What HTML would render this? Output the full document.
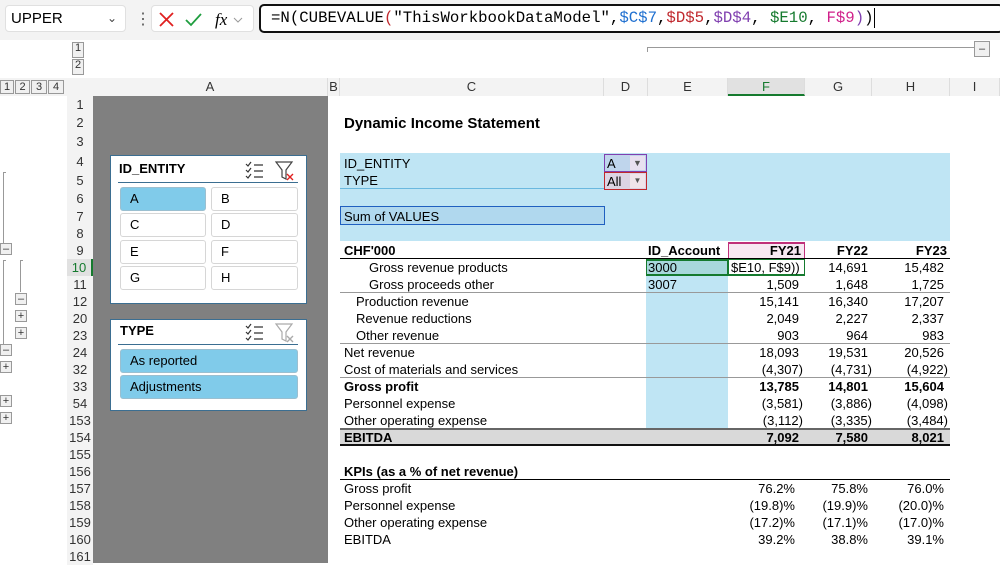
<!DOCTYPE html>
<html><head><meta charset="utf-8"><style>
*{margin:0;padding:0;box-sizing:border-box}
body{width:1000px;height:563px;overflow:hidden;background:#fff;font-family:"Liberation Sans",Arial,sans-serif;position:relative}
.a{position:absolute;white-space:nowrap}
.t{font-size:13px;line-height:17px;color:#000}
.r{text-align:right}
.b{font-weight:bold}
.rh{position:absolute;left:67px;width:26px;text-align:center;font-size:13px;color:#333;background:#f3f3f3}
.ch{position:absolute;top:78px;height:18px;font-size:13px;color:#333;text-align:center;line-height:18px;border-right:1px solid #ddd;background:#f3f3f3}
.ob{position:absolute;width:12px;height:12px;border:1px solid #999;background:#f0f0f0;font-size:11px;line-height:10px;text-align:center;color:#333}
.btn{position:absolute;height:24px;border:1px solid #d6d6d6;border-radius:3px;background:#fff;font-size:13px;line-height:22px;padding-left:9px}
.sel{background:#80cbea;border-color:#9bbfd0}
</style></head><body>
<div class="a" style="left:0;top:0;width:1000px;height:40px;background:#f3f3f3"></div>
<div class="a" style="left:5px;top:5px;width:121px;height:27px;background:#fff;border:1px solid #e0e0e0;border-radius:4px;font-size:15px;line-height:25px;padding-left:5px">UPPER<span style="position:absolute;right:8px;top:0;font-size:12px;color:#444">&#8964;</span></div>
<div class="a" style="left:135px;top:9px;font-size:16px;color:#555">&#8942;</div>
<div class="a" style="left:151px;top:5px;width:103px;height:27px;background:#fff;border:1px solid #e0e0e0;border-radius:4px">
<svg width="103" height="27"><path d="M8 7l13 13M21 7L8 20" stroke="#e02020" stroke-width="1.8"/><path d="M34 14l5 5 10-11" stroke="#1f9e3f" stroke-width="1.8" fill="none"/><text x="63" y="19" font-family="Liberation Serif" font-style="italic" font-size="17">fx</text><path d="M82 12l4 4 4-4" stroke="#999" fill="none"/></svg></div>
<div class="a" style="left:259px;top:4px;width:745px;height:29px;background:#fff;border:2px solid #111;border-radius:5px;font-family:'Liberation Mono',monospace;font-size:15.7px;line-height:25px;padding-left:10px">=N(CUBEVALUE<span style="color:#c0282d">(</span>"ThisWorkbookDataModel",<span style="color:#1e6fd0">$C$7</span>,<span style="color:#c0282d">$D$5</span>,<span style="color:#8040b0">$D$4</span>, <span style="color:#157a2e">$E10</span>, <span style="color:#d0208a">F$9</span><span style="color:#8040b0">)</span>)<span style="display:inline-block;width:1px;height:20px;background:#000;vertical-align:middle"></span></div>
<div class="ob" style="left:72px;top:42px;height:16px">1</div>
<div class="ob" style="left:72px;top:59px;height:16px">2</div>
<div class="a" style="left:647px;top:47px;width:328px;height:1px;background:#999"></div>
<div class="a" style="left:647px;top:47px;width:1px;height:5px;background:#999"></div>
<div class="ob" style="left:974px;top:41px;width:16px;height:16px;line-height:14px">&#8211;</div>
<div class="a" style="left:0;top:78px;width:67px;height:18px;background:#f3f3f3"></div>
<div class="ob" style="left:0;top:80px;width:14px;height:14px;line-height:12px">1</div><div class="ob" style="left:15px;top:80px;width:15px;height:14px;line-height:12px">2</div><div class="ob" style="left:31px;top:80px;width:16px;height:14px;line-height:12px">3</div><div class="ob" style="left:48px;top:80px;width:16px;height:14px;line-height:12px">4</div>
<div class="a" style="left:67px;top:78px;width:26px;height:18px;background:#f3f3f3"></div>
<div class="ch" style="left:93px;width:235px">A</div>
<div class="ch" style="left:328px;width:12px">B</div>
<div class="ch" style="left:340px;width:264px">C</div>
<div class="ch" style="left:604px;width:44px">D</div>
<div class="ch" style="left:648px;width:80px">E</div>
<div class="ch" style="left:728px;width:77px;background:#e1e1e1;color:#157a2e;border-bottom:2px solid #157a2e">F</div>
<div class="ch" style="left:805px;width:67px">G</div>
<div class="ch" style="left:872px;width:78px">H</div>
<div class="ch" style="left:950px;width:50px">I</div>
<div class="a" style="left:67px;top:96px;width:26px;height:467px;background:#f3f3f3"></div>
<div class="rh" style="top:96px;height:18px;line-height:18px">1</div>
<div class="rh" style="top:114px;height:18px;line-height:18px">2</div>
<div class="rh" style="top:132px;height:20px;line-height:20px">3</div>
<div class="rh" style="top:152px;height:19px;line-height:19px">4</div>
<div class="rh" style="top:171px;height:19px;line-height:19px">5</div>
<div class="rh" style="top:190px;height:18px;line-height:18px">6</div>
<div class="rh" style="top:208px;height:18px;line-height:18px">7</div>
<div class="rh" style="top:226px;height:16px;line-height:16px">8</div>
<div class="rh" style="top:242px;height:17px;line-height:17px">9</div>
<div class="rh" style="top:259px;height:17px;line-height:17px;background:#e1e1e1;color:#157a2e;border-right:2px solid #157a2e">10</div>
<div class="rh" style="top:276px;line-height:17px">11</div>
<div class="rh" style="top:293px;line-height:17px">12</div>
<div class="rh" style="top:310px;line-height:17px">20</div>
<div class="rh" style="top:327px;line-height:17px">23</div>
<div class="rh" style="top:344px;line-height:17px">24</div>
<div class="rh" style="top:361px;line-height:17px">32</div>
<div class="rh" style="top:378px;line-height:17px">33</div>
<div class="rh" style="top:395px;line-height:17px">54</div>
<div class="rh" style="top:412px;line-height:17px">153</div>
<div class="rh" style="top:429px;line-height:17px">154</div>
<div class="rh" style="top:446px;line-height:17px">155</div>
<div class="rh" style="top:463px;line-height:17px">156</div>
<div class="rh" style="top:480px;line-height:17px">157</div>
<div class="rh" style="top:497px;line-height:17px">158</div>
<div class="rh" style="top:514px;line-height:17px">159</div>
<div class="rh" style="top:531px;line-height:17px">160</div>
<div class="rh" style="top:548px;line-height:17px">161</div>
<div class="a" style="left:3px;top:172px;width:3px;height:72px;border-left:1px solid #999;border-top:1px solid #999"></div>
<div class="ob" style="left:0;top:243px">&#8211;</div>
<div class="a" style="left:3px;top:260px;width:3px;height:84px;border-left:1px solid #999;border-top:1px solid #999"></div>
<div class="a" style="left:20px;top:260px;width:3px;height:32px;border-left:1px solid #999;border-top:1px solid #999"></div>
<div class="ob" style="left:15px;top:293px">&#8211;</div>
<div class="ob" style="left:15px;top:310px">+</div>
<div class="ob" style="left:15px;top:327px">+</div>
<div class="ob" style="left:0;top:344px">&#8211;</div>
<div class="ob" style="left:0;top:361px">+</div>
<div class="ob" style="left:0;top:395px">+</div>
<div class="ob" style="left:0;top:412px">+</div>
<div class="a" style="left:93px;top:96px;width:235px;height:467px;background:#808080"></div>
<div class="a" style="left:110px;top:155px;width:197px;height:149px;background:#fff;border:1px solid #3b6e91"></div>
<div class="a b" style="left:119px;top:161px;font-size:13px">ID_ENTITY</div>
<svg class="a" style="left:244px;top:160px" width="56" height="22"><path d="M2 4l2 2 3-4M2 10l2 2 3-4M2 16l2 2 3-4M10 5h9M10 11h9M10 17h9" stroke="#333" stroke-width="1.2" fill="none"/><path d="M32 2h16l-6 8v9l-4-2v-7z" stroke="#444" stroke-width="1.2" fill="none"/><path d="M43 14l6 6M49 14l-6 6" stroke="#e02020" stroke-width="1.4"/></svg>
<div class="a" style="left:118px;top:182px;width:180px;height:1px;background:#3b6e91"></div>
<div class="btn sel" style="left:120px;top:187px;width:86px">A</div>
<div class="btn" style="left:211px;top:187px;width:87px">B</div>
<div class="btn" style="left:120px;top:213px;width:86px">C</div>
<div class="btn" style="left:211px;top:213px;width:87px">D</div>
<div class="btn" style="left:120px;top:240px;width:86px">E</div>
<div class="btn" style="left:211px;top:240px;width:87px">F</div>
<div class="btn" style="left:120px;top:266px;width:86px">G</div>
<div class="btn" style="left:211px;top:266px;width:87px">H</div>
<div class="a" style="left:110px;top:319px;width:197px;height:92px;background:#fff;border:1px solid #3b6e91"></div>
<div class="a b" style="left:120px;top:323px;font-size:13px">TYPE</div>
<svg class="a" style="left:244px;top:322px" width="56" height="22"><path d="M2 4l2 2 3-4M2 10l2 2 3-4M2 16l2 2 3-4M10 5h9M10 11h9M10 17h9" stroke="#333" stroke-width="1.2" fill="none"/><path d="M32 2h16l-6 8v9l-4-2v-7z" stroke="#aaa" stroke-width="1.2" fill="none"/><path d="M43 14l6 6M49 14l-6 6" stroke="#aaa" stroke-width="1.4"/></svg>
<div class="a" style="left:118px;top:344px;width:180px;height:1px;background:#3b6e91"></div>
<div class="btn sel" style="left:120px;top:349px;width:178px">As reported</div>
<div class="btn sel" style="left:120px;top:375px;width:178px">Adjustments</div>
<div class="a b" style="left:344px;top:115px;font-size:15px">Dynamic Income Statement</div>
<div class="a" style="left:340px;top:153px;width:610px;height:88px;background:#bfe5f4"></div>
<div class="a" style="left:340px;top:188px;width:264px;height:1px;background:#6ab8df"></div>
<div class="a t" style="left:344px;top:155px">ID_ENTITY</div>
<div class="a t" style="left:344px;top:172px">TYPE</div>
<div class="a" style="left:604px;top:154px;width:43px;height:18px;border:1px solid #8040b0;background:#bfd5ec"></div>
<div class="a t" style="left:607px;top:155px">A</div>
<div class="a" style="left:630px;top:156px;width:15px;height:14px;background:#e8e0f0;font-size:9px;text-align:center;line-height:14px;color:#555">&#9660;</div>
<div class="a" style="left:604px;top:172px;width:43px;height:18px;border:1px solid #c0282d;background:#dcd4e4"></div>
<div class="a t" style="left:607px;top:173px">All</div>
<div class="a" style="left:630px;top:174px;width:15px;height:14px;background:#f0e4ea;font-size:8px;text-align:center;line-height:14px;color:#555">&#9660;</div>
<div class="a" style="left:340px;top:206px;width:265px;height:19px;border:1px solid #2060c0;background:#b0d8ee"></div>
<div class="a t" style="left:344px;top:208px">Sum of VALUES</div>
<div class="a" style="left:646px;top:259px;width:82px;height:170px;background:#bfe5f4"></div>
<div class="a" style="left:646px;top:259px;width:82px;height:17px;background:#a8d8dc;border:1px solid #157a2e;border-width:2px 1px"></div>
<div class="a" style="left:728px;top:242px;width:77px;height:17px;background:#f7e8f2;border:1px solid #c0307a;border-top-width:2px"></div>
<div class="a" style="left:728px;top:259px;width:77px;height:17px;border:1px solid #157a2e;border-bottom-width:2px"></div>
<div class="a t b" style="left:344px;top:242px">CHF'000</div>
<div class="a t b" style="left:648px;top:242px">ID_Account</div>
<div class="a t b r" style="left:728px;top:242px;width:73px">FY21</div>
<div class="a t b r" style="left:805px;top:242px;width:63px">FY22</div>
<div class="a t b r" style="left:872px;top:242px;width:75px">FY23</div>
<div class="a" style="left:340px;top:258px;width:610px;height:1px;background:#000"></div>
<div class="a t" style="left:369px;top:259px">Gross revenue products</div>
<div class="a t" style="left:648px;top:259px">3000</div>
<div class="a t" style="left:731px;top:259px">$E10, F$9))</div>
<div class="a t r" style="left:805px;top:259px;width:63px">14,691</div>
<div class="a t r" style="left:872px;top:259px;width:72px">15,482</div>
<div class="a t" style="left:369px;top:276px">Gross proceeds other</div>
<div class="a t" style="left:648px;top:276px">3007</div>
<div class="a t r" style="left:728px;top:276px;width:71px">1,509</div>
<div class="a t r" style="left:805px;top:276px;width:63px">1,648</div>
<div class="a t r" style="left:872px;top:276px;width:72px">1,725</div>
<div class="a" style="left:340px;top:292px;width:610px;height:1px;background:#999"></div>
<div class="a t" style="left:356px;top:293px">Production revenue</div>
<div class="a t r" style="left:728px;top:293px;width:71px">15,141</div>
<div class="a t r" style="left:805px;top:293px;width:63px">16,340</div>
<div class="a t r" style="left:872px;top:293px;width:72px">17,207</div>
<div class="a t" style="left:356px;top:310px">Revenue reductions</div>
<div class="a t r" style="left:728px;top:310px;width:71px">2,049</div>
<div class="a t r" style="left:805px;top:310px;width:63px">2,227</div>
<div class="a t r" style="left:872px;top:310px;width:72px">2,337</div>
<div class="a t" style="left:356px;top:327px">Other revenue</div>
<div class="a t r" style="left:728px;top:327px;width:71px">903</div>
<div class="a t r" style="left:805px;top:327px;width:63px">964</div>
<div class="a t r" style="left:872px;top:327px;width:72px">983</div>
<div class="a" style="left:340px;top:343px;width:610px;height:1px;background:#999"></div>
<div class="a t" style="left:344px;top:344px">Net revenue</div>
<div class="a t r" style="left:728px;top:344px;width:71px">18,093</div>
<div class="a t r" style="left:805px;top:344px;width:63px">19,531</div>
<div class="a t r" style="left:872px;top:344px;width:72px">20,526</div>
<div class="a t" style="left:344px;top:361px">Cost of materials and services</div>
<div class="a t r" style="left:728px;top:361px;width:75px">(4,307)</div>
<div class="a t r" style="left:805px;top:361px;width:67px">(4,731)</div>
<div class="a t r" style="left:872px;top:361px;width:76px">(4,922)</div>
<div class="a" style="left:340px;top:377px;width:610px;height:1px;background:#999"></div>
<div class="a t b" style="left:344px;top:378px">Gross profit</div>
<div class="a t b r" style="left:728px;top:378px;width:71px">13,785</div>
<div class="a t b r" style="left:805px;top:378px;width:63px">14,801</div>
<div class="a t b r" style="left:872px;top:378px;width:72px">15,604</div>
<div class="a t" style="left:344px;top:395px">Personnel expense</div>
<div class="a t r" style="left:728px;top:395px;width:75px">(3,581)</div>
<div class="a t r" style="left:805px;top:395px;width:67px">(3,886)</div>
<div class="a t r" style="left:872px;top:395px;width:76px">(4,098)</div>
<div class="a t" style="left:344px;top:412px">Other operating expense</div>
<div class="a t r" style="left:728px;top:412px;width:75px">(3,112)</div>
<div class="a t r" style="left:805px;top:412px;width:67px">(3,335)</div>
<div class="a t r" style="left:872px;top:412px;width:76px">(3,484)</div>
<div class="a" style="left:340px;top:428px;width:610px;height:18px;background:#d9d9d9;border-top:2px solid #666;border-bottom:2px solid #111"></div>
<div class="a t b" style="left:344px;top:429px">EBITDA</div>
<div class="a t b r" style="left:728px;top:429px;width:71px">7,092</div>
<div class="a t b r" style="left:805px;top:429px;width:63px">7,580</div>
<div class="a t b r" style="left:872px;top:429px;width:72px">8,021</div>
<div class="a t b" style="left:344px;top:463px">KPIs (as a % of net revenue)</div>
<div class="a" style="left:340px;top:479px;width:610px;height:1px;background:#000"></div>
<div class="a t" style="left:344px;top:480px">Gross profit</div>
<div class="a t r" style="left:728px;top:480px;width:67px">76.2%</div>
<div class="a t r" style="left:805px;top:480px;width:63px">75.8%</div>
<div class="a t r" style="left:872px;top:480px;width:72px">76.0%</div>
<div class="a t" style="left:344px;top:497px">Personnel expense</div>
<div class="a t r" style="left:728px;top:497px;width:67px">(19.8)%</div>
<div class="a t r" style="left:805px;top:497px;width:63px">(19.9)%</div>
<div class="a t r" style="left:872px;top:497px;width:72px">(20.0)%</div>
<div class="a t" style="left:344px;top:514px">Other operating expense</div>
<div class="a t r" style="left:728px;top:514px;width:67px">(17.2)%</div>
<div class="a t r" style="left:805px;top:514px;width:63px">(17.1)%</div>
<div class="a t r" style="left:872px;top:514px;width:72px">(17.0)%</div>
<div class="a t" style="left:344px;top:531px">EBITDA</div>
<div class="a t r" style="left:728px;top:531px;width:67px">39.2%</div>
<div class="a t r" style="left:805px;top:531px;width:63px">38.8%</div>
<div class="a t r" style="left:872px;top:531px;width:72px">39.1%</div>
</body></html>
